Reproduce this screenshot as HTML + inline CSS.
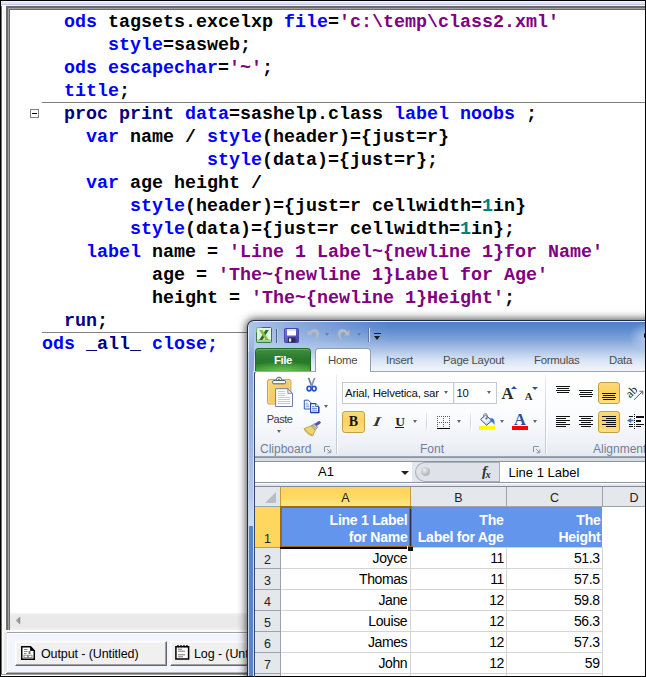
<!DOCTYPE html>
<html>
<head>
<meta charset="utf-8">
<title>SAS ExcelXP</title>
<style>
html,body{margin:0;padding:0;}
body{width:646px;height:677px;overflow:hidden;background:#fff;position:relative;font-family:"Liberation Sans",sans-serif;}
#root{position:absolute;left:0;top:0;width:646px;height:677px;overflow:hidden;background:#fff;}
.abs{position:absolute;}
/* ---------- SAS editor ---------- */
.code{position:absolute;white-space:pre;font-family:"Liberation Mono",monospace;font-weight:bold;font-size:18.33px;line-height:23px;height:23px;color:#000;letter-spacing:0;}
.k{color:#0000ff;}
.n{color:#000080;}
.s{color:#800080;}
.t{color:#008080;}
.sep{position:absolute;left:42px;width:603px;height:1px;background:#808080;}
/* ---------- Excel ---------- */
#xl{position:absolute;left:247px;top:320px;width:420px;height:380px;}
.ui{font-family:"Liberation Sans",sans-serif;font-size:12px;color:#3b3b3b;position:absolute;white-space:nowrap;line-height:14px;}
.tb{font-size:11.4px;color:#4c4c4c;letter-spacing:-0.25px;}
.grp{font-family:"Liberation Sans",sans-serif;font-size:12px;color:#6e7f9a;position:absolute;white-space:nowrap;line-height:14px;}
.cell{position:absolute;padding-right:0;margin-left:1px;margin-top:-0.4px;letter-spacing:-0.4px;font-family:"Liberation Sans",sans-serif;font-size:14px;color:#000;text-align:right;white-space:nowrap;line-height:21px;height:21px;}
.hd{position:absolute;letter-spacing:-0.25px;margin-left:0.5px;font-family:"Liberation Sans",sans-serif;font-size:14px;font-weight:bold;color:#fff;text-align:right;white-space:nowrap;line-height:17px;}
.rh{position:absolute;font-family:"Liberation Sans",sans-serif;font-size:12.5px;color:#222;text-align:center;white-space:nowrap;line-height:21px;height:21px;left:255px;width:25px;margin-top:1.6px;}
.ch{position:absolute;font-family:"Liberation Sans",sans-serif;font-size:12.5px;color:#222;text-align:center;white-space:nowrap;line-height:19px;height:19px;top:489px;}
.gl{position:absolute;background:#d4d4d4;}
</style>
</head>
<body>
<div id="root">

<!-- ================= SAS window chrome ================= -->
<div class="abs" style="left:0;top:0;width:646px;height:677px;background:#000;"></div>
<div class="abs" style="left:1px;top:1px;width:644px;height:675px;background:#fff;"></div>
<!-- top strip -->
<div class="abs" style="left:1px;top:1px;width:644px;height:1px;background:#f4f5fb;"></div>
<div class="abs" style="left:1px;top:2px;width:644px;height:2px;background:#e0e5f5;"></div>
<div class="abs" style="left:1px;top:4px;width:644px;height:1px;background:#c3c9de;"></div>
<div class="abs" style="left:1px;top:5px;width:644px;height:1px;background:#f3f1ec;"></div>
<!-- left white strip -->
<div class="abs" style="left:1px;top:5px;width:5px;height:669px;background:#fbfbfb;"></div>
<div class="abs" style="left:1px;top:5px;width:1px;height:669px;background:#e9e9e9;"></div>
<!-- sunken border top -->
<div class="abs" style="left:6px;top:6px;width:639px;height:2px;background:#6b6b6b;"></div>
<div class="abs" style="left:8px;top:8px;width:637px;height:1px;background:#a0a0a0;"></div><div class="abs" style="left:9px;top:9px;width:636px;height:1px;background:#6b6b6b;"></div>
<!-- sunken border left -->
<div class="abs" style="left:6px;top:6px;width:2px;height:624px;background:#6b6b6b;"></div>
<div class="abs" style="left:8px;top:8px;width:1px;height:622px;background:#a0a0a0;"></div><div class="abs" style="left:9px;top:9px;width:1px;height:621px;background:#6b6b6b;"></div>

<!-- code -->
<div id="code">
<div class="code" style="left:64px;top:11px;"><span class="k">ods</span> tagsets.excelxp <span class="k">file</span>=<span class="s">'c:\temp\class2.xml'</span></div>
<div class="code" style="left:64px;top:34px;">    <span class="k">style</span>=sasweb;</div>
<div class="code" style="left:64px;top:57px;"><span class="k">ods</span> <span class="k">escapechar</span>=<span class="s">'~'</span>;</div>
<div class="code" style="left:64px;top:80px;"><span class="k">title</span>;</div>
<div class="code" style="left:64px;top:103px;"><span class="n">proc print</span> <span class="k">data</span>=sashelp.class <span class="k">label</span> <span class="k">noobs</span> ;</div>
<div class="code" style="left:64px;top:126px;">  <span class="k">var</span> name / <span class="k">style</span>(header)={just=r}</div>
<div class="code" style="left:64px;top:149px;">             <span class="k">style</span>(data)={just=r};</div>
<div class="code" style="left:64px;top:172px;">  <span class="k">var</span> age height /</div>
<div class="code" style="left:64px;top:195px;">      <span class="k">style</span>(header)={just=r cellwidth=<span class="t">1</span>in}</div>
<div class="code" style="left:64px;top:218px;">      <span class="k">style</span>(data)={just=r cellwidth=<span class="t">1</span>in};</div>
<div class="code" style="left:64px;top:241px;">  <span class="k">label</span> name = <span class="s">'Line 1 Label~{newline 1}for Name'</span></div>
<div class="code" style="left:64px;top:264px;">        age = <span class="s">'The~{newline 1}Label for Age'</span></div>
<div class="code" style="left:64px;top:287px;">        height = <span class="s">'The~{newline 1}Height'</span>;</div>
<div class="code" style="left:64px;top:310px;"><span class="n">run</span>;</div>
<div class="code" style="left:42px;top:333px;"><span class="k">ods</span> <span class="n">_all_</span> <span class="k">close;</span></div>
</div>
<div class="sep" style="top:102px;"></div>
<div class="sep" style="top:332px;"></div>
<!-- fold box -->
<div class="abs" style="left:30px;top:109px;width:7px;height:7px;border:1px solid #808080;background:#fff;"></div>
<div class="abs" style="left:32px;top:113px;width:5px;height:1px;background:#000;"></div>

<!-- horizontal scrollbar -->
<div class="abs" style="left:10px;top:613px;width:635px;height:17px;background:linear-gradient(to bottom,#f3f3f3 0%,#eaeaea 18%,#e9e9e9 80%,#f0f0f0 100%);"></div>
<svg class="abs" style="left:15px;top:616px;" width="6" height="9" viewBox="0 0 6 9"><defs><linearGradient id="garr" x1="0" y1="0" x2="1" y2="0"><stop offset="0" stop-color="#b4b4b4"/><stop offset="1" stop-color="#8a8a8a"/></linearGradient></defs><path d="M0.6 4.5 L5.2 0.6 V8.4 Z" fill="url(#garr)"/></svg>
<div class="abs" style="left:6px;top:630px;width:639px;height:2px;background:#fafafa;"></div>
<!-- window bar -->
<div class="abs" style="left:6px;top:632px;width:639px;height:1px;background:#a0a0a0;"></div>
<div class="abs" style="left:7px;top:633px;width:638px;height:1px;background:#ffffff;"></div>
<div class="abs" style="left:8px;top:634px;width:637px;height:38px;background:#f2f5fb;"></div>
<div class="abs" style="left:4px;top:10px;width:1px;height:662px;background:#f0f0f0;"></div>
<div class="abs" style="left:4px;top:632px;width:3px;height:40px;background:#e9e9e9;"></div>
<div class="abs" style="left:1px;top:6px;width:1px;height:669px;background:#6e6e6e;"></div>
<div class="abs" style="left:7px;top:672px;width:638px;height:1px;background:#b4b4b4;"></div>
<div class="abs" style="left:6px;top:673px;width:639px;height:1px;background:#696969;"></div>
<div class="abs" style="left:1px;top:674px;width:644px;height:1px;background:#a0a0a0;"></div>
<div class="abs" style="left:1px;top:675px;width:644px;height:1px;background:#ffffff;"></div>
<!-- tab buttons -->
<div class="abs" style="left:15px;top:641px;width:152px;height:25px;box-sizing:border-box;background:#f0f0f0;border-top:1px solid #fff;border-left:1px solid #fff;border-right:1px solid #696969;border-bottom:1px solid #696969;box-shadow:inset -1px -1px 0 #a0a0a0, inset 1px 1px 0 #f8f8f8;"></div>
<div class="abs" style="left:170px;top:641px;width:152px;height:25px;box-sizing:border-box;background:#f0f0f0;border-top:1px solid #fff;border-left:1px solid #fff;border-right:1px solid #696969;border-bottom:1px solid #696969;box-shadow:inset -1px -1px 0 #a0a0a0, inset 1px 1px 0 #f8f8f8;"></div>
<!-- output icon -->
<svg class="abs" style="left:21px;top:646px;" width="14" height="14" viewBox="0 0 14 14">
  <path d="M0.75 0.75 H9.5 L13.25 4.5 V13.25 H0.75 Z" fill="#fff" stroke="#000" stroke-width="1.5"/>
  <path d="M9.5 0.75 V4.5 H13.25" fill="#000" stroke="#000" stroke-width="0.8"/>
  <path d="M3 3.5H6.5M3 5.5H6.5M3 7.5H5.5" stroke="#8a8a8a" stroke-width="1"/>
  <rect x="7.5" y="5" width="2" height="3" fill="#777"/>
  <rect x="3" y="9.2" width="3.6" height="2.4" fill="none" stroke="#888" stroke-width="0.9"/>
  <rect x="7.4" y="9.2" width="3.6" height="2.4" fill="none" stroke="#888" stroke-width="0.9"/>
</svg>
<!-- log icon -->
<svg class="abs" style="left:175px;top:645px;" width="15" height="15" viewBox="0 0 15 15">
  <path d="M0.9 1.8 H13.6 V13.9 H0.9 Z" fill="#fff" stroke="#000" stroke-width="1.5"/>
  <path d="M2.5 0.3 L4 2 M5.5 0.3 L7 2 M8.5 0.3 L10 2 M11.5 0.3 L13 2" stroke="#000" stroke-width="1.4"/>
  <path d="M3 4.2H7M3 6.2H10M3 9.8H10M3 11.8H8" stroke="#777" stroke-width="1"/>
</svg>
<div class="ui" style="left:41px;top:647px;font-size:12.5px;color:#000;letter-spacing:-0.1px;">Output - (Untitled)</div>
<div class="ui" style="left:194px;top:647px;font-size:12.5px;color:#000;letter-spacing:-0.1px;">Log - (Untitled)</div>

<!-- EXCEL -->
<div id="excel" class="abs" style="left:0;top:0;width:646px;height:677px;overflow:hidden;">
<!-- shadow + frame -->
<div class="abs" style="left:247px;top:320px;width:420px;height:380px;border-radius:7px 0 0 0;box-shadow:0 0 8px 1px rgba(0,0,0,0.72);background:#1f2c47;"></div>
<div class="abs" style="left:248px;top:321px;width:420px;height:380px;border-radius:6px 0 0 0;background:#e3ecfa;"></div>
<!-- title gradient -->
<div class="abs" style="left:249px;top:322px;width:420px;height:49px;border-radius:5px 0 0 0;background:linear-gradient(to bottom,#4f81c9 0%,#5c8bce 15%,#7da2d9 35%,#a9c1e6 55%,#d3e0f3 75%,#eaf0f9 92%,#f0f4fb 100%);"></div>
<div class="abs" style="left:249px;top:322px;width:140px;height:30px;border-radius:5px 0 0 0;background:linear-gradient(to right,rgba(190,208,238,0.85) 0%,rgba(190,208,238,0.45) 40%,rgba(190,208,238,0) 100%);"></div>
<!-- left frame strip -->
<div class="abs" style="left:249px;top:330px;width:5px;height:196px;background:linear-gradient(to bottom,rgba(143,173,222,0) 0%,#8fadde 12%,#8caadc 25%,#9bb6e2 55%,#b5cbec 85%,#d0ddf2 100%);"></div>
<div class="abs" style="left:249px;top:526px;width:5px;height:160px;background:#5585cc;"></div>
<div class="abs" style="left:248px;top:352px;width:1px;height:330px;background:#c5d5f0;"></div>
<div class="abs" style="left:253px;top:371px;width:1px;height:310px;background:#d3def1;"></div>
<div class="abs" style="left:254px;top:373px;width:1px;height:310px;background:#36466a;z-index:3;"></div>

<div class="abs" style="left:620px;top:322px;width:26px;height:34px;background:radial-gradient(ellipse 17px 15px at 100% 45%,rgba(215,228,248,0.6) 0%,rgba(215,228,248,0) 100%);"></div>
<div class="abs" style="left:643.5px;top:333px;width:2px;height:5px;border-radius:1.5px 0 0 1.5px;background:#0a0a0a;"></div>
<!-- QAT icons -->
<svg class="abs" style="left:256px;top:327px;" width="16" height="16" viewBox="0 0 16 16">
  <rect x="0.5" y="0.5" width="15" height="15" rx="1" fill="#f4faf2" stroke="#2e7d32"/>
  <path d="M0.5 6 Q2 1 7 0.5 L0.5 0.5 Z" fill="#c5e3c0"/>
  <rect x="1.5" y="1.5" width="13" height="13" fill="#e3f2df"/>
  <path d="M9.6 3 L12.8 3 L6.4 13 L3.2 13 Z" fill="#1e6b2e"/>
  <path d="M3.2 3 L6.4 3 L12.8 13 L9.6 13 Z" fill="#86c040"/>
  <path d="M0.5 12.5H15.5V15.5H0.5Z" fill="#2e7d32" opacity="0.35"/>
</svg>
<div class="abs" style="left:276px;top:329px;width:1px;height:14px;background:#52658c;"></div>
<div class="abs" style="left:277px;top:329px;width:1px;height:14px;background:#b9cbea;"></div>
<svg class="abs" style="left:284px;top:328px;" width="15" height="15" viewBox="0 0 15 15">
  <defs><linearGradient id="gsv" x1="0" y1="0" x2="1" y2="1"><stop offset="0" stop-color="#7a78e0"/><stop offset="1" stop-color="#3f3da8"/></linearGradient></defs><rect x="0.5" y="0.5" width="14" height="14" rx="1" fill="url(#gsv)" stroke="#4744ad"/>
  <rect x="3" y="1" width="9" height="6.5" fill="#fff"/>
  <rect x="3" y="1" width="9" height="2" fill="#dfe3f7"/>
  <rect x="4" y="9.5" width="7.5" height="5" fill="#2b2b55"/>
  <rect x="5" y="10.5" width="2.2" height="3.2" fill="#e8e8f5"/>
</svg>
<!-- undo -->
<svg class="abs" style="left:306.5px;top:328px;" width="14" height="14" viewBox="0 0 14 14">
  <path d="M0.3 1.8 L0.3 7.6 L6.2 7.6 L4.4 5.8 C5.6 4.2 7.8 3.9 8.8 5.2 C10 7 8.8 10 7.2 12.4 L7.9 12.9 C11 10.2 13.2 6.6 11.7 3.4 C10.1 0.1 5 0.2 2.3 3.8 Z" fill="#b3bbca" stroke="#9aa6bd" stroke-width="0.4"/>
</svg>
<div class="abs" style="left:324.7px;top:333px;width:0;height:0;border-left:2.75px solid transparent;border-right:2.75px solid transparent;border-top:3px solid #6d7f9f;"></div>
<!-- redo -->
<svg class="abs" style="left:336.3px;top:328px;" width="14" height="14" viewBox="0 0 14 14">
  <g transform="translate(14,0) scale(-1,1)">
  <path d="M0.3 1.8 L0.3 7.6 L6.2 7.6 L4.4 5.8 C5.6 4.2 7.8 3.9 8.8 5.2 C10 7 8.8 10 7.2 12.4 L7.9 12.9 C11 10.2 13.2 6.6 11.7 3.4 C10.1 0.1 5 0.2 2.3 3.8 Z" fill="#b3bbca" stroke="#9aa6bd" stroke-width="0.4"/>
  </g>
</svg>
<div class="abs" style="left:356.7px;top:333px;width:0;height:0;border-left:2.75px solid transparent;border-right:2.75px solid transparent;border-top:3px solid #6d7f9f;"></div>
<div class="abs" style="left:368px;top:328px;width:1px;height:14px;background:#5d749c;"></div>
<div class="abs" style="left:369px;top:328px;width:1px;height:14px;background:#dbe6f7;"></div>
<div class="abs" style="left:374px;top:333px;width:7px;height:1px;background:#1a1a1a;"></div>
<div class="abs" style="left:374px;top:336px;width:0;height:0;border-left:3.5px solid transparent;border-right:3.5px solid transparent;border-top:4px solid #1a1a1a;"></div>

<!-- ribbon tab row -->
<div class="abs" style="left:255px;top:348px;width:56px;height:23px;box-sizing:border-box;border:1px solid #1f6a27;border-bottom:none;border-radius:4px 4px 0 0;background:radial-gradient(ellipse 70% 45% at 50% 100%,rgba(110,200,80,0.85) 0%,rgba(110,200,80,0) 100%),linear-gradient(to bottom,#3f8f3d 0%,#2a7a2d 45%,#287a2b 65%,#3f9a35 100%);box-shadow:inset 0 1px 0 rgba(255,255,255,0.25);"></div>
<div class="ui" style="left:255px;top:353px;width:56px;text-align:center;color:#fff;font-size:11.5px;font-weight:bold;letter-spacing:-0.5px;">File</div>
<!-- ribbon body -->
<div class="abs" style="left:254px;top:371px;width:400px;height:86px;box-sizing:border-box;border:1px solid #9aa5b8;border-left-color:#36466a;border-radius:3px 0 0 0;background:linear-gradient(to bottom,#ffffff 0%,#fbfcfe 50%,#eef1f6 85%,#e6eaf0 100%);"></div>
<!-- home tab -->
<div class="abs" style="left:315px;top:348px;width:56px;height:24px;box-sizing:border-box;border:1px solid #929db1;border-bottom:none;border-radius:4px 4px 0 0;background:#fff;"></div>
<div class="ui tb" style="left:328px;top:353px;">Home</div>
<div class="ui tb" style="left:386px;top:353px;">Insert</div>
<div class="ui tb" style="left:443px;top:353px;">Page Layout</div>
<div class="ui tb" style="left:534px;top:353px;">Formulas</div>
<div class="ui tb" style="left:609px;top:353px;">Data</div>

<!-- ===== Clipboard group ===== -->
<svg class="abs" style="left:264px;top:375px;" width="32" height="34" viewBox="0 0 32 34">
  <defs>
    <linearGradient id="gbd" x1="0" y1="0" x2="1" y2="1"><stop offset="0" stop-color="#fbd67c"/><stop offset="0.6" stop-color="#f6c867"/><stop offset="1" stop-color="#efbb58"/></linearGradient>
  </defs>
  <rect x="3.5" y="4.6" width="23.4" height="24.4" rx="1.6" fill="url(#gbd)" stroke="#c9a05a"/>
  <rect x="4.6" y="5.7" width="21.2" height="22.2" rx="1" fill="none" stroke="#fde39d" stroke-width="0.8" opacity="0.8"/>
  <circle cx="15" cy="4.6" r="2.5" fill="#fff" stroke="#4e5e76" stroke-width="1"/>
  <rect x="8.6" y="5.5" width="12.9" height="3.3" rx="1.2" fill="#f4f6f9" stroke="#4e5e76" stroke-width="1"/>
  <circle cx="15" cy="4.5" r="0.9" fill="#8a6a3a"/>
  <path d="M11.6 13.7 L23.8 13.7 L28.5 18.4 L28.5 31.5 L11.6 31.5 Z" fill="#ffffff" stroke="#6d819e" stroke-width="1"/>
  <path d="M23.8 13.7 L23.8 18.4 L28.5 18.4 Z" fill="#dde5ef" stroke="#6d819e" stroke-width="0.8"/>
  <g stroke="#bcc7d6" stroke-width="0.9"><path d="M14 16.5H21M14 18.5H21M14 20.5H21M14 22.5H26.2M14 24.5H26.2M14 26.5H26.2M14 28.5H26.2"/></g>
</svg>
<div class="ui" style="left:259px;top:412px;width:41px;text-align:center;font-size:11px;letter-spacing:-0.5px;">Paste</div>
<div class="abs" style="left:276.75px;top:430px;width:0;height:0;border-left:2.75px solid transparent;border-right:2.75px solid transparent;border-top:3px solid #666;"></div>
<!-- scissors -->
<svg class="abs" style="left:305px;top:377px;" width="14" height="16" viewBox="0 0 14 16">
  <path d="M2.6 0.8 L4.6 0.9 L7.6 9.2 L5.9 9.6 Z" fill="#6f7e96"/>
  <path d="M10.6 0.8 L8.7 0.9 L5.6 9.2 L7.3 9.6 Z" fill="#8794aa"/>
  <ellipse cx="4.1" cy="11.6" rx="2" ry="2.3" fill="none" stroke="#2a52c9" stroke-width="1.7"/>
  <ellipse cx="9.1" cy="11.6" rx="2" ry="2.3" fill="none" stroke="#2a52c9" stroke-width="1.7"/>
</svg>
<!-- copy -->
<svg class="abs" style="left:303px;top:399px;" width="18" height="15" viewBox="0 0 18 15">
  <path d="M1.3 1.2 L5.4 1.2 L7.7 3.5 L7.7 10 L1.3 10 Z" fill="#fff" stroke="#2f55ad" stroke-width="1"/>
  <path d="M2.6 4.2H5.2M2.6 6H6.4M2.6 7.8H6.4" stroke="#6e8fdc" stroke-width="0.9"/>
  <path d="M7.6 4.6 L12.6 4.6 L15.6 7.6 L15.6 13.4 L7.6 13.4 Z" fill="#fff" stroke="#24489f" stroke-width="1.1"/>
  <path d="M12.6 4.6 V7.6 H15.6" fill="#dfe8fa" stroke="#24489f" stroke-width="0.8"/>
  <path d="M9 7.6H11.6M9 9.4H14.2M9 11.2H14.2" stroke="#4f78d6" stroke-width="0.9"/>
  <path d="M7.6 13.9H16.1V7.8" stroke="#1c3a86" stroke-width="0.8" fill="none"/>
</svg>
<div class="abs" style="left:323.75px;top:405px;width:0;height:0;border-left:2.75px solid transparent;border-right:2.75px solid transparent;border-top:3px solid #666;"></div>
<!-- brush -->
<svg class="abs" style="left:303px;top:421px;" width="19" height="16" viewBox="0 0 19 16">
  <path d="M13.2 3.6 L16.2 1.6" stroke="#5a4fb8" stroke-width="3" stroke-linecap="round"/>
  <path d="M8.2 4.8 L11.6 2.6 L14.6 6.2 L12.2 9.2 Z" fill="#a4a7b0" stroke="#6c6f7a" stroke-width="0.6"/>
  <path d="M9.5 5.5 L12.8 8.2 M10.6 4 L13.8 7" stroke="#e4e6ea" stroke-width="0.7"/>
  <path d="M1 7.6 L8.2 4.9 L12.2 9.2 L9.6 14.9 C6 14.2 2.6 11.4 1 7.6 Z" fill="#ecd474" stroke="#b5983a" stroke-width="0.8"/>
  <path d="M2.5 8.5 C4 11 6.5 13 9.5 13.8" stroke="#c9ad48" stroke-width="0.9" fill="none"/>
</svg>
<div class="grp" style="left:260px;top:442px;">Clipboard</div>
<svg class="abs" style="left:324px;top:446px;" width="8" height="8" viewBox="0 0 8 8"><path d="M0.5 6V0.5H6" stroke="#8994a8" fill="none"/><path d="M3 3L6.5 6.5M6.8 3.5V6.8H3.5" stroke="#8994a8" fill="none"/></svg>
<div class="abs" style="left:336px;top:375px;width:1px;height:79px;background:linear-gradient(to bottom,#e9edf3,#c9d1de 50%,#c3cbd8);"></div>
<div class="abs" style="left:337px;top:375px;width:1px;height:79px;background:#fff;"></div>

<!-- ===== Font group ===== -->
<div class="abs" style="left:342px;top:382px;width:155px;height:22px;box-sizing:border-box;border:1px solid #c3cad6;background:#fff;"></div>
<div class="abs" style="left:453px;top:383px;width:1px;height:20px;background:#c3cad6;"></div>
<div class="abs" style="left:454px;top:383px;width:1px;height:20px;background:#eef1f6;"></div>
<div class="ui" style="left:345px;top:386px;color:#111;width:94px;overflow:hidden;font-size:11.5px;letter-spacing:-0.25px;">Arial, Helvetica, sans</div>
<div class="abs" style="left:443.75px;top:391px;width:0;height:0;border-left:2.75px solid transparent;border-right:2.75px solid transparent;border-top:3px solid #666;"></div>
<div class="ui" style="left:456.5px;top:386px;color:#111;font-size:11.3px;letter-spacing:-0.3px;">10</div>
<div class="abs" style="left:486.75px;top:391px;width:0;height:0;border-left:2.75px solid transparent;border-right:2.75px solid transparent;border-top:3px solid #666;"></div>
<div class="abs" style="left:501.5px;top:385px;font-family:'Liberation Serif',serif;font-weight:bold;font-size:16.5px;line-height:17px;color:#2b2b2b;">A</div>
<div class="abs" style="left:510.5px;top:386px;width:0;height:0;border-left:3px solid transparent;border-right:3px solid transparent;border-bottom:3px solid #2b4fa3;"></div>
<div class="abs" style="left:524.8px;top:388.6px;font-family:'Liberation Serif',serif;font-weight:bold;font-size:10.8px;line-height:14px;color:#2b2b2b;">A</div>
<div class="abs" style="left:531.5px;top:387px;width:0;height:0;border-left:3px solid transparent;border-right:3px solid transparent;border-top:3px solid #2b4fa3;"></div>
<!-- B I U -->
<div class="abs" style="left:342px;top:411px;width:23px;height:22px;box-sizing:border-box;border:1px solid #c2a04a;border-radius:3px;background:linear-gradient(to bottom,#fbd97a 0%,#fdd25e 45%,#fede83 100%);"></div>
<div class="abs" style="left:342px;top:413px;width:23px;text-align:center;font-family:'Liberation Serif',serif;font-weight:bold;font-size:14px;line-height:18px;color:#111;">B</div>
<div class="abs" style="left:366px;top:413px;width:22px;text-align:center;font-family:'Liberation Serif',serif;font-style:italic;font-weight:bold;font-size:13.5px;line-height:18px;color:#333;transform:skewX(-10deg) scaleX(1.35);">I</div>
<div class="abs" style="left:389px;top:413px;width:22px;text-align:center;font-family:'Liberation Serif',serif;font-weight:bold;font-size:13.5px;line-height:18px;color:#222;">U</div>
<div class="abs" style="left:395px;top:427px;width:9px;height:1px;background:#222;"></div>
<div class="abs" style="left:412.75px;top:420px;width:0;height:0;border-left:2.75px solid transparent;border-right:2.75px solid transparent;border-top:3px solid #666;"></div>
<div class="abs" style="left:426px;top:412px;width:1px;height:21px;background:linear-gradient(to bottom,#f2f4f8,#c9d0dc 50%,#f0f2f6);"></div>
<div class="abs" style="left:427px;top:412px;width:1px;height:21px;background:#fff;"></div>
<!-- borders -->
<svg class="abs" style="left:436px;top:414px;" width="16" height="16" viewBox="0 0 16 16" shape-rendering="crispEdges">
  <g fill="#59606a"><rect x="1" y="2" width="1" height="1"/><rect x="3" y="2" width="1" height="1"/><rect x="5" y="2" width="1" height="1"/><rect x="7" y="2" width="1" height="1"/><rect x="9" y="2" width="1" height="1"/><rect x="11" y="2" width="1" height="1"/><rect x="13" y="2" width="1" height="1"/><rect x="1" y="4" width="1" height="1"/><rect x="7" y="4" width="1" height="1"/><rect x="13" y="4" width="1" height="1"/><rect x="1" y="6" width="1" height="1"/><rect x="7" y="6" width="1" height="1"/><rect x="13" y="6" width="1" height="1"/><rect x="1" y="8" width="1" height="1"/><rect x="3" y="8" width="1" height="1"/><rect x="5" y="8" width="1" height="1"/><rect x="7" y="8" width="1" height="1"/><rect x="9" y="8" width="1" height="1"/><rect x="11" y="8" width="1" height="1"/><rect x="13" y="8" width="1" height="1"/><rect x="1" y="10" width="1" height="1"/><rect x="7" y="10" width="1" height="1"/><rect x="13" y="10" width="1" height="1"/><rect x="1" y="12" width="1" height="1"/><rect x="7" y="12" width="1" height="1"/><rect x="13" y="12" width="1" height="1"/></g>
  <rect x="1" y="14" width="13" height="1" fill="#000"/><rect x="1" y="15" width="13" height="0.4" fill="#000" opacity="0.4"/>
</svg>
<div class="abs" style="left:456.75px;top:420px;width:0;height:0;border-left:2.75px solid transparent;border-right:2.75px solid transparent;border-top:3px solid #666;"></div>
<div class="abs" style="left:470px;top:412px;width:1px;height:21px;background:linear-gradient(to bottom,#f2f4f8,#c9d0dc 50%,#f0f2f6);"></div>
<div class="abs" style="left:471px;top:412px;width:1px;height:21px;background:#fff;"></div>
<!-- fill bucket -->
<svg class="abs" style="left:478px;top:412px;" width="18" height="19" viewBox="0 0 18 19">
  <defs><linearGradient id="gbk" x1="0" y1="0" x2="1" y2="1"><stop offset="0" stop-color="#ffffff"/><stop offset="0.55" stop-color="#e9eef7"/><stop offset="1" stop-color="#9fb2d6"/></linearGradient></defs>
  <path d="M7.4 3.2 L14.2 8.4 L8.6 13.2 L2.6 7.4 Z" fill="url(#gbk)" stroke="#3b4f7d" stroke-width="1"/>
  <path d="M5.6 5.4 C5 2 7 1.2 8.2 1.8 C9.4 2.4 9.6 4 9.2 6" fill="none" stroke="#5b6f96" stroke-width="0.9"/>
  <circle cx="8.4" cy="6.6" r="1" fill="#4a5d86"/>
  <path d="M12.2 6.6 C15.2 5.4 17.2 7.6 16.4 13 C15.4 11 14.4 10 12.6 9.4 Z" fill="#3f74d8"/>
  <rect x="1" y="14" width="16" height="4" fill="#ffff00"/>
</svg>
<div class="abs" style="left:499.75px;top:420px;width:0;height:0;border-left:2.75px solid transparent;border-right:2.75px solid transparent;border-top:3px solid #666;"></div>
<!-- font color -->
<div class="abs" style="left:512px;top:411px;width:16px;text-align:center;font-family:'Liberation Serif',serif;font-weight:bold;font-size:16.4px;line-height:17px;color:#2d4f9e;">A</div>
<div class="abs" style="left:512px;top:426px;width:16px;height:4px;background:#ff0000;"></div>
<div class="abs" style="left:532.75px;top:420px;width:0;height:0;border-left:2.75px solid transparent;border-right:2.75px solid transparent;border-top:3px solid #666;"></div>
<div class="grp" style="left:420px;top:442px;">Font</div>
<svg class="abs" style="left:533px;top:446px;" width="8" height="8" viewBox="0 0 8 8"><path d="M0.5 6V0.5H6" stroke="#8994a8" fill="none"/><path d="M3 3L6.5 6.5M6.8 3.5V6.8H3.5" stroke="#8994a8" fill="none"/></svg>
<div class="abs" style="left:545px;top:375px;width:1px;height:79px;background:linear-gradient(to bottom,#e9edf3,#c9d1de 50%,#c3cbd8);"></div>
<div class="abs" style="left:546px;top:375px;width:1px;height:79px;background:#fff;"></div>

<!-- ===== Alignment group ===== -->
<div class="abs" style="left:598px;top:382px;width:22px;height:22px;box-sizing:border-box;border:1px solid #c2a04a;border-radius:3px;background:linear-gradient(to bottom,#fbd97a 0%,#fdd25e 45%,#fede83 100%);"></div>
<div class="abs" style="left:598px;top:411px;width:22px;height:22px;box-sizing:border-box;border:1px solid #c2a04a;border-radius:3px;background:linear-gradient(to bottom,#fbd97a 0%,#fdd25e 45%,#fede83 100%);"></div>
<svg class="abs" style="left:550px;top:378px;" width="96" height="60" viewBox="0 0 96 60">
  <g fill="#111" shape-rendering="crispEdges"><rect x="6" y="8" width="14" height="1"/><rect x="7" y="10" width="12" height="1"/><rect x="6" y="12" width="14" height="1"/><rect x="7" y="14" width="12" height="1"/><rect x="29" y="12" width="14" height="1"/><rect x="30" y="14" width="12" height="1"/><rect x="29" y="16" width="14" height="1"/><rect x="30" y="18" width="12" height="1"/><rect x="52" y="15" width="14" height="1"/><rect x="53" y="17" width="12" height="1"/><rect x="52" y="19" width="14" height="1"/><rect x="53" y="21" width="12" height="1"/><rect x="6" y="38" width="14" height="1"/><rect x="6" y="40" width="10" height="1"/><rect x="6" y="42" width="14" height="1"/><rect x="6" y="44" width="10" height="1"/><rect x="6" y="46" width="14" height="1"/><rect x="6" y="48" width="10" height="1"/><rect x="29" y="38" width="14" height="1"/><rect x="31" y="40" width="10" height="1"/><rect x="29" y="42" width="14" height="1"/><rect x="31" y="44" width="10" height="1"/><rect x="29" y="46" width="14" height="1"/><rect x="31" y="48" width="10" height="1"/><rect x="52" y="38" width="14" height="1"/><rect x="56" y="40" width="10" height="1"/><rect x="52" y="42" width="14" height="1"/><rect x="56" y="44" width="10" height="1"/><rect x="52" y="46" width="14" height="1"/><rect x="56" y="48" width="10" height="1"/></g>
  <!-- orientation -->
  <g transform="translate(85.5,16) rotate(-45)">
    <text x="-7" y="-0.5" font-family="Liberation Serif,serif" font-size="12" fill="#222">ab</text>
  </g>
  <path d="M84 21.8 L92.6 13.4 M89.4 13.2 H92.8 V16.6" stroke="#5a5a5a" stroke-width="1" fill="none"/>
  <!-- decrease indent -->
  <path d="M77 42.5 L81.2 40 V45 Z" fill="#3a6ad0"/><path d="M80 42.5H83.5" stroke="#3a6ad0" stroke-width="1.4"/>
  <g fill="#111" shape-rendering="crispEdges">
    <rect x="84" y="36" width="1" height="1"/><rect x="84" y="38" width="1" height="1"/><rect x="84" y="40" width="1" height="1"/><rect x="84" y="42" width="1" height="1"/><rect x="84" y="44" width="1" height="1"/><rect x="84" y="46" width="1" height="1"/><rect x="84" y="48" width="1" height="1"/><rect x="84" y="50" width="1" height="1"/>
    <rect x="79" y="38" width="4" height="1"/><rect x="86" y="38" width="8" height="2"/>
    <rect x="86" y="42" width="5" height="2"/>
    <rect x="79" y="46" width="4" height="1"/><rect x="86" y="46" width="8" height="1"/>
    <rect x="79" y="48" width="4" height="1"/><rect x="86" y="48" width="5" height="1"/>
  </g>
</svg>
<div class="grp" style="left:593px;top:442px;">Alignment</div>

<!-- ===== formula bar ===== -->
<div class="abs" style="left:255px;top:457px;width:400px;height:1px;background:#8d949e;"></div>
<div class="abs" style="left:255px;top:458px;width:400px;height:3px;background:#d9dde4;"></div>
<div class="abs" style="left:255px;top:461px;width:400px;height:1px;background:#8d949e;"></div>
<div class="abs" style="left:255px;top:462px;width:400px;height:20px;background:#e4e7ed;"></div>
<div class="abs" style="left:255px;top:462px;width:157px;height:20px;background:#fff;"></div>
<div class="abs" style="left:255px;top:482px;width:400px;height:1px;background:#8f959f;"></div>
<div class="abs" style="left:255px;top:483px;width:400px;height:1px;background:#fff;"></div>
<div class="abs" style="left:255px;top:484px;width:400px;height:2px;background:#e3e7f3;"></div>
<div class="abs" style="left:255px;top:486px;width:400px;height:1px;background:#858a93;"></div>
<div class="ui" style="left:255px;top:464px;width:142px;text-align:center;font-size:13px;line-height:16px;color:#000;">A1</div>
<div class="abs" style="left:401px;top:471px;width:0;height:0;border-left:4px solid transparent;border-right:4px solid transparent;border-top:4px solid #222;"></div>
<!-- capsule -->
<div class="abs" style="left:415px;top:462px;width:84px;height:20px;box-sizing:border-box;border:1px solid #a9afba;border-right:none;border-radius:10px 0 0 10px;background:#dfe2e8;"></div>
<div class="abs" style="left:420.5px;top:467px;width:9px;height:9px;border-radius:50%;background:radial-gradient(circle at 38% 35%,#ececec 0%,#c9cacd 40%,#a6a8ad 85%,#9c9ea4 100%);"></div>
<div class="abs" style="left:482px;top:462px;font-family:'Liberation Serif',serif;font-style:italic;font-weight:bold;font-size:15px;line-height:19px;color:#333;">f<span style="font-size:10.5px;margin-left:-1.5px;position:relative;top:1.5px;">x</span></div>
<div class="abs" style="left:499px;top:462px;width:160px;height:20px;background:#fff;border-left:1px solid #a9afba;"></div>
<div class="ui" style="left:508.5px;top:465px;font-size:13px;line-height:16px;color:#000;">Line 1 Label</div>

<!-- ===== grid ===== -->
<div class="abs" style="left:255px;top:487px;width:391px;height:190px;background:#fff;"></div>
<!-- column header bg -->
<div class="abs" style="left:255px;top:487px;width:391px;height:19px;background:#e4e7ec;"></div>
<div class="abs" style="left:255px;top:506px;width:391px;height:1px;background:#9da3ad;"></div>
<!-- select all -->
<div class="abs" style="left:255px;top:487px;width:25px;height:19px;background:#e4e7ec;"></div>
<svg class="abs" style="left:264px;top:491px;" width="13" height="13" viewBox="0 0 13 13"><path d="M12 1V12H1Z" fill="#b9bec6"/></svg>
<div class="abs" style="left:280px;top:487px;width:1px;height:20px;background:#9da3ad;"></div>
<!-- col A header selected -->
<div class="abs" style="left:281px;top:487px;width:129px;height:19px;background:linear-gradient(to bottom,#ffd45c 0%,#ffd962 50%,#ffe885 100%);"></div>
<div class="abs" style="left:280px;top:487px;width:1px;height:20px;background:#c99a3c;"></div>
<div class="abs" style="left:410px;top:487px;width:1px;height:20px;background:#c99a3c;"></div>
<div class="abs" style="left:281px;top:506px;width:129px;height:1px;background:#b8862c;"></div>
<div class="abs" style="left:506px;top:487px;width:1px;height:20px;background:#9da3ad;"></div>
<div class="abs" style="left:602px;top:487px;width:1px;height:20px;background:#9da3ad;"></div>
<div class="ch" style="left:281px;width:129px;">A</div>
<div class="ch" style="left:411px;width:95px;">B</div>
<div class="ch" style="left:507px;width:95px;">C</div>
<div class="ch" style="left:624px;width:20px;">D</div>
<!-- row headers -->
<div class="abs" style="left:255px;top:507px;width:25px;height:170px;background:#e4e7ec;"></div>
<div class="abs" style="left:280px;top:507px;width:1px;height:170px;background:#9da3ad;"></div>
<div class="abs" style="left:255px;top:507px;width:25px;height:40px;background:#ffd65e;"></div>
<div class="abs" style="left:255px;top:547px;width:25px;height:1px;background:#c99a3c;"></div>
<div class="abs" style="left:280px;top:507px;width:1px;height:41px;background:#b8862c;"></div>
<div class="abs" style="left:255px;top:568px;width:25px;height:1px;background:#9da3ad;"></div>
<div class="abs" style="left:255px;top:589px;width:25px;height:1px;background:#9da3ad;"></div>
<div class="abs" style="left:255px;top:610px;width:25px;height:1px;background:#9da3ad;"></div>
<div class="abs" style="left:255px;top:631px;width:25px;height:1px;background:#9da3ad;"></div>
<div class="abs" style="left:255px;top:652px;width:25px;height:1px;background:#9da3ad;"></div>
<div class="abs" style="left:255px;top:673px;width:25px;height:1px;background:#9da3ad;"></div>
<div class="rh" style="top:527px;">1</div>
<div class="rh" style="top:548px;">2</div>
<div class="rh" style="top:569px;">3</div>
<div class="rh" style="top:590px;">4</div>
<div class="rh" style="top:611px;">5</div>
<div class="rh" style="top:632px;">6</div>
<div class="rh" style="top:653px;">7</div>
<!-- gridlines -->
<div class="gl" style="left:281px;top:568px;width:322px;height:1px;"></div>
<div class="gl" style="left:281px;top:589px;width:322px;height:1px;"></div>
<div class="gl" style="left:281px;top:610px;width:322px;height:1px;"></div>
<div class="gl" style="left:281px;top:631px;width:322px;height:1px;"></div>
<div class="gl" style="left:281px;top:652px;width:322px;height:1px;"></div>
<div class="gl" style="left:281px;top:673px;width:322px;height:1px;"></div>
<div class="gl" style="left:410px;top:548px;width:1px;height:130px;"></div>
<div class="gl" style="left:506px;top:548px;width:1px;height:130px;"></div>
<div class="gl" style="left:602px;top:548px;width:1px;height:130px;"></div>
<!-- header cells -->
<div class="abs" style="left:281px;top:507px;width:321px;height:40px;background:#6495ed;"></div>
<div class="gl" style="left:281px;top:547px;width:322px;height:1px;"></div>
<div class="hd" style="left:281px;top:512px;width:126px;">Line 1 Label<br>for Name</div>
<div class="hd" style="left:411px;top:512px;width:92px;">The<br>Label for Age</div>
<div class="hd" style="left:507px;top:512px;width:93px;">The<br>Height</div>
<!-- selection border (XOR look) -->
<div class="abs" style="left:280px;top:506px;width:132px;height:2px;background:#9b6a12;"></div>
<div class="abs" style="left:280px;top:506px;width:2px;height:43px;background:#9b6a12;"></div>
<div class="abs" style="left:409px;top:506px;width:3px;height:40px;background:#9b6a12;"></div>
<div class="abs" style="left:410px;top:509px;width:1px;height:37px;background:#2e2e2e;"></div>
<div class="abs" style="left:280px;top:546px;width:127px;height:1px;background:#9b6a12;"></div>
<div class="abs" style="left:280px;top:547px;width:127px;height:2px;background:#000;"></div>
<div class="abs" style="left:408px;top:546px;width:5px;height:5px;background:#111;border-top:1px solid #9b6a12;box-sizing:border-box;"></div>
<div class="abs" style="left:407px;top:546px;width:1px;height:5px;background:#fff;"></div>
<!-- data -->
<div class="cell" style="left:281px;top:548px;width:125.2px;">Joyce</div>
<div class="cell" style="left:281px;top:569px;width:125.2px;">Thomas</div>
<div class="cell" style="left:281px;top:590px;width:125.2px;">Jane</div>
<div class="cell" style="left:281px;top:611px;width:125.2px;">Louise</div>
<div class="cell" style="left:281px;top:632px;width:125.2px;">James</div>
<div class="cell" style="left:281px;top:653px;width:125.2px;">John</div>
<div class="cell" style="left:411px;top:548px;width:92px;">11</div>
<div class="cell" style="left:411px;top:569px;width:92px;">11</div>
<div class="cell" style="left:411px;top:590px;width:92px;">12</div>
<div class="cell" style="left:411px;top:611px;width:92px;">12</div>
<div class="cell" style="left:411px;top:632px;width:92px;">12</div>
<div class="cell" style="left:411px;top:653px;width:92px;">12</div>
<div class="cell" style="left:507px;top:548px;width:91.6px;">51.3</div>
<div class="cell" style="left:507px;top:569px;width:91.6px;">57.5</div>
<div class="cell" style="left:507px;top:590px;width:91.6px;">59.8</div>
<div class="cell" style="left:507px;top:611px;width:91.6px;">56.3</div>
<div class="cell" style="left:507px;top:632px;width:91.6px;">57.3</div>
<div class="cell" style="left:507px;top:653px;width:91.6px;">59</div>
<!-- outer black edges over excel -->
<div class="abs" style="left:645px;top:0;width:1px;height:677px;background:#000;"></div>
<div class="abs" style="left:0;top:676px;width:646px;height:1px;background:#000;"></div>

<!--XL4-->
</div>

</div>
</body>
</html>
